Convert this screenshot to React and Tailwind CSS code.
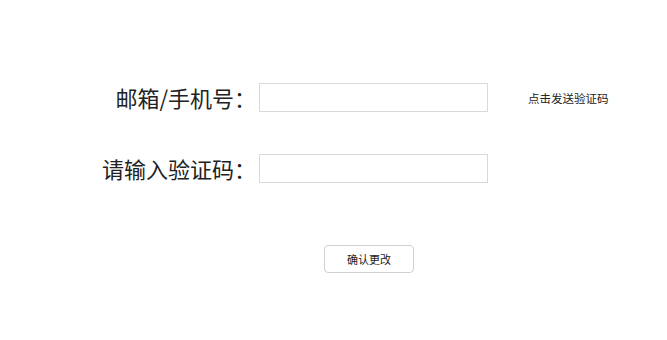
import React from "react";

export default function App() {
  const font = { fontFamily: '"Noto Sans CJK SC", "Noto Sans", sans-serif' };
  return (
    <div className="w-[667px] h-[340px] bg-white text-[#222]" style={font}>
      <div className="pt-[83px] flex flex-col">
        <div className="flex items-center h-[29px]">
          <label className="ml-[80px] w-[176px] text-right text-[22px] leading-none pb-[2px]">邮箱/手机号：</label>
          <input className="ml-[3px] w-[229px] h-[29px] border border-[#d9d9d9] outline-none" />
          <span className="ml-[40px] text-[11.5px] leading-none pt-[2px]">点击发送验证码</span>
        </div>
        <div className="flex items-center h-[29px] mt-[42px]">
          <label className="ml-[80px] w-[176px] text-right text-[22px] leading-none pb-[2px]">请输入验证码：</label>
          <input className="ml-[3px] w-[229px] h-[29px] border border-[#d9d9d9] outline-none" />
        </div>
        <div className="mt-[62px] flex">
          <button className="ml-[324px] w-[90px] h-[28px] border border-[#d0d0d0] rounded-[4px] bg-white text-[11px] leading-none">确认更改</button>
        </div>
      </div>
    </div>
  );
}
